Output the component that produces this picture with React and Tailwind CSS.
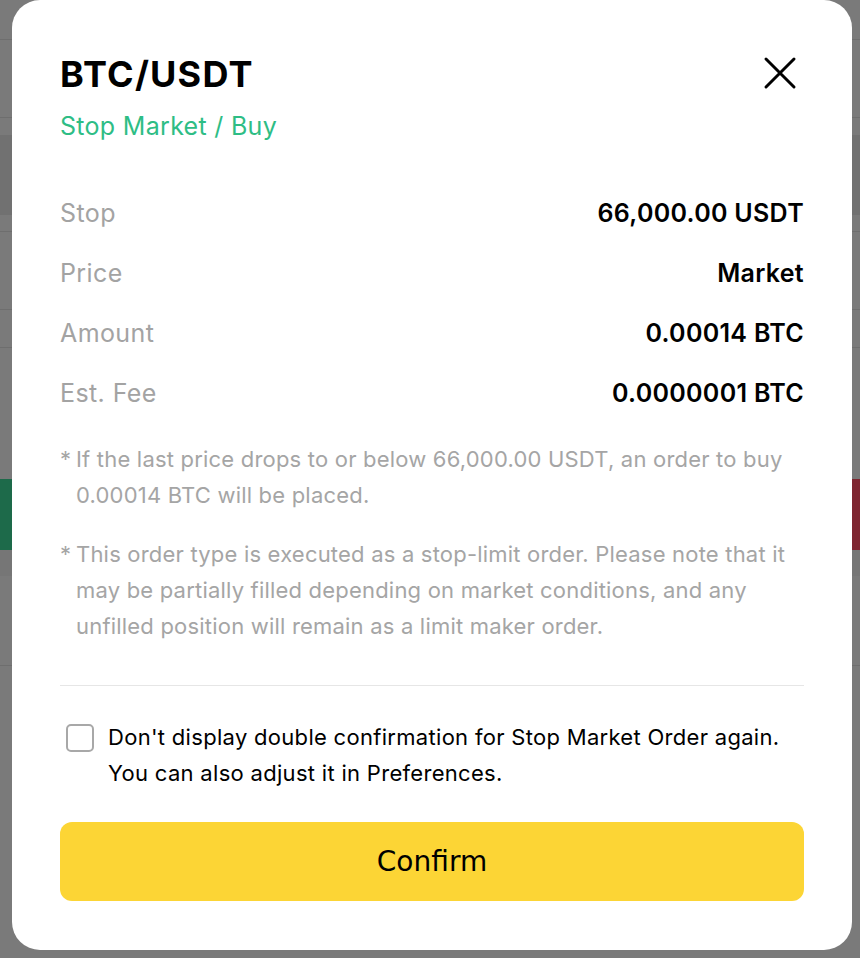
import React from 'react'

const font = { fontFamily: 'Inter, "Noto Sans", sans-serif' }

// ── BACKDROP (dimmed trading page behind the dialog) ─────
const Backdrop = () => (
  <div className="flex flex-col w-full h-full">
    <div className="h-[40px] border-b border-[#6e6e6e]" />
    <div className="h-[78px] border-b border-[#6e6e6e]" />
    <div className="h-[17px]" />
    <div className="h-[80px] bg-[#717171]" />
    <div className="h-[17px] border-b border-[#6e6e6e]" />
    <div className="h-[78px] border-b border-[#6e6e6e]" />
    <div className="h-[38px] border-b border-[#6e6e6e]" />
    <div className="h-[131px]" />
    <div className="flex justify-between h-[71px]">
      <div className="w-[12px] bg-[#1d6a4a]" />
      <div className="w-[12px] bg-[#7e2530]" />
    </div>
    <div className="h-[26px] bg-[#767676]" />
    <div className="h-[90px] border-b border-[#6e6e6e]" />
  </div>
)

// ── SUMMARY ROW ───────────────────────────────────────────
const Row = ({ label, value }) => (
  <div className="flex items-center justify-between h-[60px]">
    <span className="text-[25px] tracking-[0.4px] text-[#a3a3a3]">{label}</span>
    <span className="text-[25px] tracking-[0.3px] font-semibold text-black">{value}</span>
  </div>
)

const Note = ({ children }) => (
  <div className="flex text-[22px] tracking-[0.2px] leading-[36px] text-[#a5a5a5]">
    <span className="w-[16px] flex-shrink-0">*</span>
    <p>{children}</p>
  </div>
)

export default function App() {
  return (
    <div className="relative w-[860px] h-[958px] bg-[#7a7a7a] overflow-hidden" style={font}>
      <Backdrop />

      {/* DIALOG */}
      <div className="absolute left-[12px] top-0 w-[840px] h-[950px] bg-white rounded-[28px] px-[48px] pt-[52px] flex flex-col">

        {/* HEADER */}
        <div className="flex items-start justify-between">
          <div className="flex flex-col">
            <h1 className="text-[36px] leading-[44px] tracking-[1.2px] font-bold text-black">BTC/USDT</h1>
            <p className="mt-[14px] text-[25px] leading-[32px] tracking-[0.3px] text-[#2ebd85]">Stop Market / Buy</p>
          </div>
          <svg width="34" height="34" viewBox="0 0 34 34" className="mt-[4px] mr-[7px]">
            <path d="M3 3 L31 31 M31 3 L3 31" stroke="#000" strokeWidth="3" strokeLinecap="round" />
          </svg>
        </div>

        {/* DETAILS */}
        <div className="mt-[42px] flex flex-col">
          <Row label="Stop" value="66,000.00 USDT" />
          <Row label="Price" value="Market" />
          <Row label="Amount" value="0.00014 BTC" />
          <Row label="Est. Fee" value="0.0000001 BTC" />
        </div>

        {/* NOTES */}
        <div className="mt-[17px] flex flex-col gap-[23px]">
          <Note>If the last price drops to or below 66,000.00 USDT, an order to buy 0.00014 BTC will be placed.</Note>
          <Note>This order type is executed as a stop-limit order. Please note that it may be partially filled depending on market conditions, and any unfilled position will remain as a limit maker order.</Note>
        </div>

        <div className="mt-[41px] h-px bg-[#e6e6e6]" />

        {/* DON'T SHOW AGAIN */}
        <label className="mt-[33px] flex items-start gap-[14px] cursor-pointer">
          <span className="mt-[5px] ml-[6px] w-[28px] h-[28px] flex-shrink-0 rounded-[5px] border-2 border-[#a8a8a8]" />
          <span className="text-[22px] tracking-[0.3px] leading-[36px] text-black">
            Don't display double confirmation for Stop Market Order again.
            <br />
            You can also adjust it in Preferences.
          </span>
        </label>

        {/* CONFIRM */}
        <button
          className="mt-[31px] h-[79px] w-full rounded-[12px] bg-[#fcd535] text-[28px] text-black"
          style={{ fontFamily: '"DejaVu Sans", sans-serif' }}
        >
          Confirm
        </button>
      </div>
    </div>
  )
}
